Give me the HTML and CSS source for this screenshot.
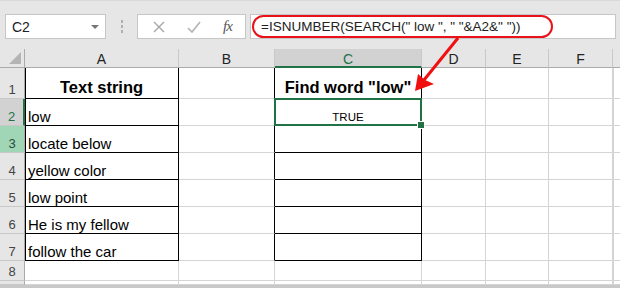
FILE: index.html
```html
<!DOCTYPE html>
<html lang="en">
<head>
    <meta charset="UTF-8">
    <title>ISNUMBER SEARCH</title>
    <link rel="stylesheet" href="styles.css">
</head>
<body>
    <div class="app">
        <div class="toolbar">
            <div class="namebox">
                <span>C2</span>
                <span class="drop"></span>
            </div>
            <div class="dots"><i></i><i></i><i></i></div>
            <div class="fxbox">
                <svg class="ico" width="14" height="14" viewBox="0 0 14 14"><path d="M2 2L12 12M12 2L2 12" stroke="#a6a6a6" stroke-width="1.4" fill="none"/></svg>
                <svg class="ico" width="16" height="14" viewBox="0 0 16 14"><path d="M2 8L6 12L14 2" stroke="#b3b3b3" stroke-width="1.6" fill="none"/></svg>
                <span class="fx">fx</span>
            </div>
            <div class="formula">
                <span class="oval">=ISNUMBER(SEARCH(" low ", " "&amp;A2&amp;" "))</span>
            </div>
        </div>

        <div class="sheet">
            <!-- column headers -->
            <div class="corner"><span class="tri"></span></div>
            <div class="hd">A</div>
            <div class="hd">B</div>
            <div class="hd sel">C</div>
            <div class="hd">D</div>
            <div class="hd">E</div>
            <div class="hd">F</div>
            <div class="hd last"></div>

            <!-- row 1 -->
            <div class="rh">1</div>
            <div class="c bx bl title">Text string</div>
            <div class="c br"></div>
            <div class="c bx title">Find word "low"</div>
            <div class="c"></div>
            <div class="c"></div>
            <div class="c"></div>
            <div class="c end"></div>

            <!-- row 2 -->
            <div class="rh sel">2</div>
            <div class="c bx bl">low</div>
            <div class="c br"></div>
            <div class="c bx active mid">TRUE</div>
            <div class="c"></div>
            <div class="c"></div>
            <div class="c"></div>
            <div class="c end"></div>

            <!-- row 3 -->
            <div class="rh hl">3</div>
            <div class="c bx bl">locate below</div>
            <div class="c br"></div>
            <div class="c bx"></div>
            <div class="c"></div>
            <div class="c"></div>
            <div class="c"></div>
            <div class="c end"></div>

            <!-- row 4 -->
            <div class="rh">4</div>
            <div class="c bx bl">yellow color</div>
            <div class="c br"></div>
            <div class="c bx"></div>
            <div class="c"></div>
            <div class="c"></div>
            <div class="c"></div>
            <div class="c end"></div>

            <!-- row 5 -->
            <div class="rh">5</div>
            <div class="c bx bl">low point</div>
            <div class="c br"></div>
            <div class="c bx"></div>
            <div class="c"></div>
            <div class="c"></div>
            <div class="c"></div>
            <div class="c end"></div>

            <!-- row 6 -->
            <div class="rh">6</div>
            <div class="c bx bl">He is my fellow</div>
            <div class="c br"></div>
            <div class="c bx"></div>
            <div class="c"></div>
            <div class="c"></div>
            <div class="c"></div>
            <div class="c end"></div>

            <!-- row 7 -->
            <div class="rh">7</div>
            <div class="c bx bl">follow the car</div>
            <div class="c br"></div>
            <div class="c bx"></div>
            <div class="c"></div>
            <div class="c"></div>
            <div class="c"></div>
            <div class="c end"></div>

            <!-- row 8 -->
            <div class="rh">8</div>
            <div class="c"></div>
            <div class="c"></div>
            <div class="c"></div>
            <div class="c"></div>
            <div class="c"></div>
            <div class="c"></div>
            <div class="c end"></div>

            <!-- row 9, cut off -->
            <div class="rh"></div>
            <div class="c"></div>
            <div class="c"></div>
            <div class="c"></div>
            <div class="c"></div>
            <div class="c"></div>
            <div class="c"></div>
            <div class="c end"></div>

            <div class="hscroll"></div>
        </div>

        <svg class="arrow" width="620" height="288" viewBox="0 0 620 288">
            <line x1="458" y1="38" x2="424" y2="80" stroke="#f01010" stroke-width="3"/>
            <path d="M415 91L418 74L425 80L434 84Z" fill="#f01010"/>
        </svg>
    </div>
</body>
</html>
```

FILE: styles.css
```css
* {
    box-sizing: border-box;
}

body {
    margin: 0;
    background: #e6e6e6;
    font-family: 'Liberation Sans', Arial, sans-serif;
    color: #222;
}

.app {
    position: relative;
    width: 620px;
    height: 288px;
    overflow: hidden;
}

/* ---------- formula toolbar ---------- */

.toolbar {
    display: flex;
    align-items: flex-start;
    height: 49px;
    padding: 13px 4px 0 5px;
    border-top: 1px solid #d9d9d9;
}

.namebox,
.fxbox,
.formula {
    height: 25px;
    background: #fff;
    border: 1px solid #c6c6c6;
}

.namebox {
    width: 101px;
    display: flex;
    align-items: center;
    justify-content: space-between;
    padding: 0 6px 0 6px;
    font-size: 14px;
    color: #222;
}

.drop {
    width: 0;
    height: 0;
    border-left: 4px solid transparent;
    border-right: 4px solid transparent;
    border-top: 4px solid #777;
}

.dots {
    width: 31px;
    height: 25px;
    display: flex;
    flex-direction: column;
    align-items: center;
    justify-content: center;
    gap: 2px;
}

.dots i {
    display: block;
    width: 2px;
    height: 3px;
    background: #b0b0b0;
}

.fxbox {
    width: 109px;
    display: flex;
    align-items: center;
    padding-left: 14px;
}

.fxbox .ico:first-child {
    margin-right: 20px;
}

.fx {
    margin-left: 21px;
    font-family: 'Liberation Serif', 'Times New Roman', serif;
    font-style: italic;
    font-size: 15px;
    color: #555;
    letter-spacing: -1px;
}

.formula {
    flex: 1;
    margin-left: 4px;
    display: flex;
    align-items: center;
}

.oval {
    width: 301px;
    height: 23px;
    margin-left: 1px;
    padding-left: 7px;
    display: flex;
    align-items: center;
    border: 2.5px solid #ea1219;
    border-radius: 12px;
    font-size: 13.5px;
    color: #222;
    white-space: pre;
}

/* ---------- sheet grid ---------- */

.sheet {
    display: grid;
    grid-template-columns: 25px 154px 96px 147px 64px 63px 64px 7px;
    grid-template-rows: 19px 31px repeat(6, 27px) 20px 4px 3px;
    background: #fff;
}

.corner {
    position: relative;
    background: #e6e6e6;
    border-right: 1px solid #ababab;
    border-bottom: 1px solid #ababab;
}

.tri {
    position: absolute;
    right: 3px;
    bottom: 3px;
    width: 0;
    height: 0;
    border-left: 12px solid transparent;
    border-bottom: 12px solid #b4b4b4;
}

.hd {
    background: #e6e6e6;
    border-right: 1px solid #c8c8c8;
    border-bottom: 1px solid #ababab;
    text-align: center;
    font-size: 14px;
    line-height: 21px;
    color: #222;
}

.hd.sel {
    background: #d2d2d2;
    color: #217346;
    border-bottom: 2px solid #217346;
}

.hd.last {
    border-right: none;
}

.rh {
    background: #e6e6e6;
    border-right: 1px solid #ababab;
    border-bottom: 1px solid #c8c8c8;
    display: flex;
    align-items: flex-end;
    justify-content: center;
    padding-bottom: 1px;
    font-size: 13px;
    color: #444;
}

.rh.sel {
    background: #d2d2d2;
    color: #217346;
    border-right: 2px solid #217346;
}

.rh.hl {
    background: #a0d6b5;
    color: #2b4a3a;
}

.c {
    position: relative;
    display: flex;
    align-items: flex-end;
    padding: 0 3px 0;
    border-right: 1px solid #d4d4d4;
    border-bottom: 1px solid #d4d4d4;
    font-size: 15px;
    color: #000;
    white-space: nowrap;
}

.c.bx {
    border-right-color: #000;
    border-bottom-color: #000;
}

.c.bl {
    box-shadow: inset 1px 0 0 #000;
}

.c.br {
    border-right-color: #000;
}

.c.title {
    justify-content: center;
    font-weight: bold;
    font-size: 16.5px;
    padding-bottom: 1px;
}

.c.mid {
    justify-content: center;
    font-size: 11.5px;
    padding-bottom: 2px;
}

.c.active::after {
    content: "";
    position: absolute;
    left: -1px;
    top: -1px;
    right: -1px;
    bottom: -1px;
    border: 2px solid #217346;
}

.c.active::before {
    content: "";
    position: absolute;
    right: -4px;
    bottom: -4px;
    width: 6px;
    height: 6px;
    background: #217346;
    border: 1px solid #fff;
    z-index: 1;
}

.c.end {
    border-right: 5px solid #c8c8c8;
    border-left: 1px solid #d4d4d4;
}

.hscroll {
    grid-column: 1 / -1;
    background: #c8c8c8;
}

.arrow {
    position: absolute;
    left: 0;
    top: 0;
    pointer-events: none;
}
```
